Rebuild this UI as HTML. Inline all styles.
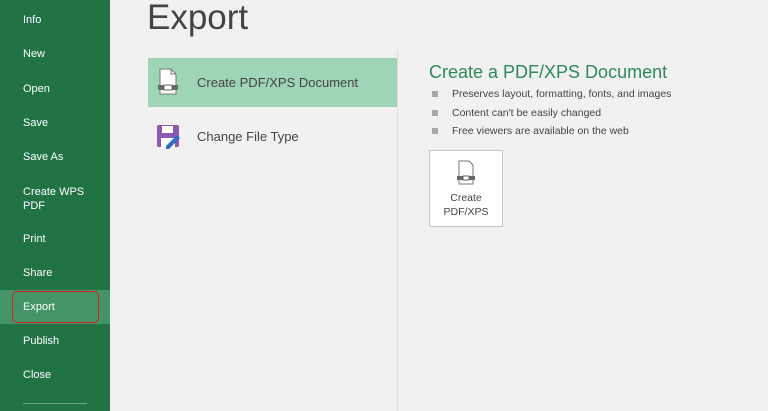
<!DOCTYPE html>
<html><head><style>
body{margin:0;width:768px;height:411px;overflow:hidden;background:#f1f1f1;font-family:"Liberation Sans",sans-serif;position:relative}
.side{position:absolute;left:0;top:0;width:110px;height:411px;background:#217346}
.side .i{position:absolute;left:23px;color:#fff;font-size:11px}
.hl{position:absolute;left:0;top:290px;width:110px;height:34px;background:#439467}
.red{position:absolute;left:12px;top:291px;width:85px;height:30px;border:1.5px solid #d92020;border-radius:5px}
.t{position:absolute;color:#444;font-size:13px}
.b{position:absolute;left:432px;width:6px;height:6px;background:#a8a8a8}
.bt{position:absolute;left:452px;font-size:10.5px;color:#444}
</style></head><body>
<div class="side">
<div class="hl"></div>
<div class="i" style="top:14px">Info</div>
<div class="i" style="top:48px">New</div>
<div class="i" style="top:83px">Open</div>
<div class="i" style="top:117px">Save</div>
<div class="i" style="top:151px">Save As</div>
<div class="i" style="top:185px;line-height:14px">Create WPS<br>PDF</div>
<div class="i" style="top:233px">Print</div>
<div class="i" style="top:267px">Share</div>
<div class="i" style="top:301px">Export</div>
<div class="i" style="top:335px">Publish</div>
<div class="i" style="top:369px">Close</div>
<div class="i" style="top:403px;width:64px;height:1px;background:#6aa685"></div>
</div>
<div class="red"></div>
<div style="position:absolute;left:147px;top:-2px;font-size:35px;color:#444">Export</div>
<div style="position:absolute;left:397px;top:50px;width:1px;height:361px;background:#dcdcdc"></div>
<div style="position:absolute;left:148px;top:58px;width:249px;height:49px;background:#9fd5b7"></div>
<svg style="position:absolute;left:156px;top:68px" width="24" height="28"><path d="M4 1h11l5 5v20H4z" fill="#fff" stroke="#777"/><path d="M15 1v5h5" fill="none" stroke="#777"/><rect x="2" y="17" width="20" height="5" fill="#666"/><rect x="8" y="17" width="8" height="5" fill="#fff" stroke="#666"/></svg>
<div class="t" style="left:197px;top:75px">Create PDF/XPS Document</div>
<svg style="position:absolute;left:156px;top:124px" width="26" height="26"><rect x="1" y="1" width="22" height="22" rx="2" fill="#8c58b4"/><rect x="6" y="2" width="11" height="7" fill="#fff"/><rect x="5" y="14" width="14" height="9" fill="#fff"/><path d="M10 22l11-11 3 3-11 11h-3z" fill="#2f6fc0"/></svg>
<div class="t" style="left:197px;top:129px">Change File Type</div>
<div style="position:absolute;left:429px;top:62px;font-size:18px;color:#2e8a56">Create a PDF/XPS Document</div>
<div class="b" style="top:91px"></div><div class="bt" style="top:88px">Preserves layout, formatting, fonts, and images</div>
<div class="b" style="top:110px"></div><div class="bt" style="top:107px">Content can't be easily changed</div>
<div class="b" style="top:128px"></div><div class="bt" style="top:125px">Free viewers are available on the web</div>
<div style="position:absolute;left:429px;top:150px;width:72px;height:75px;background:#fff;border:1px solid #c6c6c6"></div>
<svg style="position:absolute;left:455px;top:160px" width="22" height="26"><path d="M4 1h10l4 4v19H4z" fill="#fff" stroke="#777"/><rect x="2" y="16" width="18" height="4" fill="#666"/><rect x="8" y="16" width="6" height="4" fill="#fff" stroke="#666"/></svg>
<div style="position:absolute;left:429px;top:191px;width:74px;text-align:center;font-size:10.5px;color:#444;line-height:14px">Create<br>PDF/XPS</div>
</body></html>
